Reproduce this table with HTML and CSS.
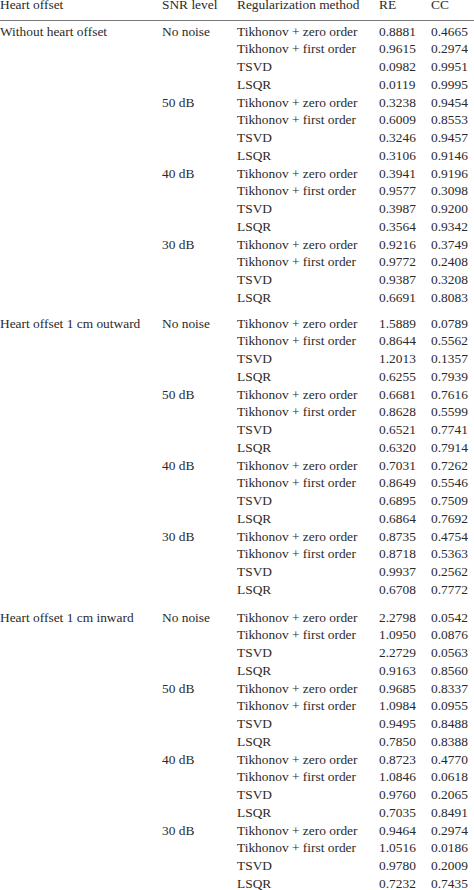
FILE: index.html
```html
<!DOCTYPE html>
<html lang="en">
<head>
<meta charset="utf-8">
<title>Regularization results</title>
<link rel="stylesheet" href="styles.css">
</head>
<body>
<div class="sheet">
  <div class="row head">
    <span>Heart offset</span><span>SNR level</span><span>Regularization method</span><span>RE</span><span>CC</span>
  </div>

  <div class="group">
    <div class="row"><span>Without heart offset</span><span>No noise</span><span>Tikhonov + zero order</span><span>0.8881</span><span>0.4665</span></div>
    <div class="row"><span></span><span></span><span>Tikhonov + first order</span><span>0.9615</span><span>0.2974</span></div>
    <div class="row"><span></span><span></span><span>TSVD</span><span>0.0982</span><span>0.9951</span></div>
    <div class="row"><span></span><span></span><span>LSQR</span><span>0.0119</span><span>0.9995</span></div>
    <div class="row"><span></span><span>50 dB</span><span>Tikhonov + zero order</span><span>0.3238</span><span>0.9454</span></div>
    <div class="row"><span></span><span></span><span>Tikhonov + first order</span><span>0.6009</span><span>0.8553</span></div>
    <div class="row"><span></span><span></span><span>TSVD</span><span>0.3246</span><span>0.9457</span></div>
    <div class="row"><span></span><span></span><span>LSQR</span><span>0.3106</span><span>0.9146</span></div>
    <div class="row"><span></span><span>40 dB</span><span>Tikhonov + zero order</span><span>0.3941</span><span>0.9196</span></div>
    <div class="row"><span></span><span></span><span>Tikhonov + first order</span><span>0.9577</span><span>0.3098</span></div>
    <div class="row"><span></span><span></span><span>TSVD</span><span>0.3987</span><span>0.9200</span></div>
    <div class="row"><span></span><span></span><span>LSQR</span><span>0.3564</span><span>0.9342</span></div>
    <div class="row"><span></span><span>30 dB</span><span>Tikhonov + zero order</span><span>0.9216</span><span>0.3749</span></div>
    <div class="row"><span></span><span></span><span>Tikhonov + first order</span><span>0.9772</span><span>0.2408</span></div>
    <div class="row"><span></span><span></span><span>TSVD</span><span>0.9387</span><span>0.3208</span></div>
    <div class="row"><span></span><span></span><span>LSQR</span><span>0.6691</span><span>0.8083</span></div>
  </div>

  <div class="group">
    <div class="row"><span>Heart offset 1 cm outward</span><span>No noise</span><span>Tikhonov + zero order</span><span>1.5889</span><span>0.0789</span></div>
    <div class="row"><span></span><span></span><span>Tikhonov + first order</span><span>0.8644</span><span>0.5562</span></div>
    <div class="row"><span></span><span></span><span>TSVD</span><span>1.2013</span><span>0.1357</span></div>
    <div class="row"><span></span><span></span><span>LSQR</span><span>0.6255</span><span>0.7939</span></div>
    <div class="row"><span></span><span>50 dB</span><span>Tikhonov + zero order</span><span>0.6681</span><span>0.7616</span></div>
    <div class="row"><span></span><span></span><span>Tikhonov + first order</span><span>0.8628</span><span>0.5599</span></div>
    <div class="row"><span></span><span></span><span>TSVD</span><span>0.6521</span><span>0.7741</span></div>
    <div class="row"><span></span><span></span><span>LSQR</span><span>0.6320</span><span>0.7914</span></div>
    <div class="row"><span></span><span>40 dB</span><span>Tikhonov + zero order</span><span>0.7031</span><span>0.7262</span></div>
    <div class="row"><span></span><span></span><span>Tikhonov + first order</span><span>0.8649</span><span>0.5546</span></div>
    <div class="row"><span></span><span></span><span>TSVD</span><span>0.6895</span><span>0.7509</span></div>
    <div class="row"><span></span><span></span><span>LSQR</span><span>0.6864</span><span>0.7692</span></div>
    <div class="row"><span></span><span>30 dB</span><span>Tikhonov + zero order</span><span>0.8735</span><span>0.4754</span></div>
    <div class="row"><span></span><span></span><span>Tikhonov + first order</span><span>0.8718</span><span>0.5363</span></div>
    <div class="row"><span></span><span></span><span>TSVD</span><span>0.9937</span><span>0.2562</span></div>
    <div class="row"><span></span><span></span><span>LSQR</span><span>0.6708</span><span>0.7772</span></div>
  </div>

  <div class="group group-wide">
    <div class="row"><span>Heart offset 1 cm inward</span><span>No noise</span><span>Tikhonov + zero order</span><span>2.2798</span><span>0.0542</span></div>
    <div class="row"><span></span><span></span><span>Tikhonov + first order</span><span>1.0950</span><span>0.0876</span></div>
    <div class="row"><span></span><span></span><span>TSVD</span><span>2.2729</span><span>0.0563</span></div>
    <div class="row"><span></span><span></span><span>LSQR</span><span>0.9163</span><span>0.8560</span></div>
    <div class="row"><span></span><span>50 dB</span><span>Tikhonov + zero order</span><span>0.9685</span><span>0.8337</span></div>
    <div class="row"><span></span><span></span><span>Tikhonov + first order</span><span>1.0984</span><span>0.0955</span></div>
    <div class="row"><span></span><span></span><span>TSVD</span><span>0.9495</span><span>0.8488</span></div>
    <div class="row"><span></span><span></span><span>LSQR</span><span>0.7850</span><span>0.8388</span></div>
    <div class="row"><span></span><span>40 dB</span><span>Tikhonov + zero order</span><span>0.8723</span><span>0.4770</span></div>
    <div class="row"><span></span><span></span><span>Tikhonov + first order</span><span>1.0846</span><span>0.0618</span></div>
    <div class="row"><span></span><span></span><span>TSVD</span><span>0.9760</span><span>0.2065</span></div>
    <div class="row"><span></span><span></span><span>LSQR</span><span>0.7035</span><span>0.8491</span></div>
    <div class="row"><span></span><span>30 dB</span><span>Tikhonov + zero order</span><span>0.9464</span><span>0.2974</span></div>
    <div class="row"><span></span><span></span><span>Tikhonov + first order</span><span>1.0516</span><span>0.0186</span></div>
    <div class="row"><span></span><span></span><span>TSVD</span><span>0.9780</span><span>0.2009</span></div>
    <div class="row"><span></span><span></span><span>LSQR</span><span>0.7232</span><span>0.7435</span></div>
  </div>
</div>
</body>
</html>
```

FILE: styles.css
```css
html, body {
  margin: 0;
  padding: 0;
  background: #ffffff;
  overflow: hidden;
}

.sheet {
  width: 474px;
  overflow: hidden;
  font-family: "Liberation Serif", "Times New Roman", serif;
  font-size: 13.4px;
  color: #2a2a2a;
}

.row {
  display: grid;
  grid-template-columns: 162px 75px 142px 52px 60px;
  height: 17.75px;
  line-height: 17.75px;
  white-space: nowrap;
}

.head {
  height: 10px;
  line-height: 10px;
  padding-bottom: 10px;
  border-bottom: 1px solid #7a7a7a;
  margin-bottom: 1.6px;
}

.group + .group {
  margin-top: 8px;
}

.group + .group-wide {
  margin-top: 10px;
}
```
